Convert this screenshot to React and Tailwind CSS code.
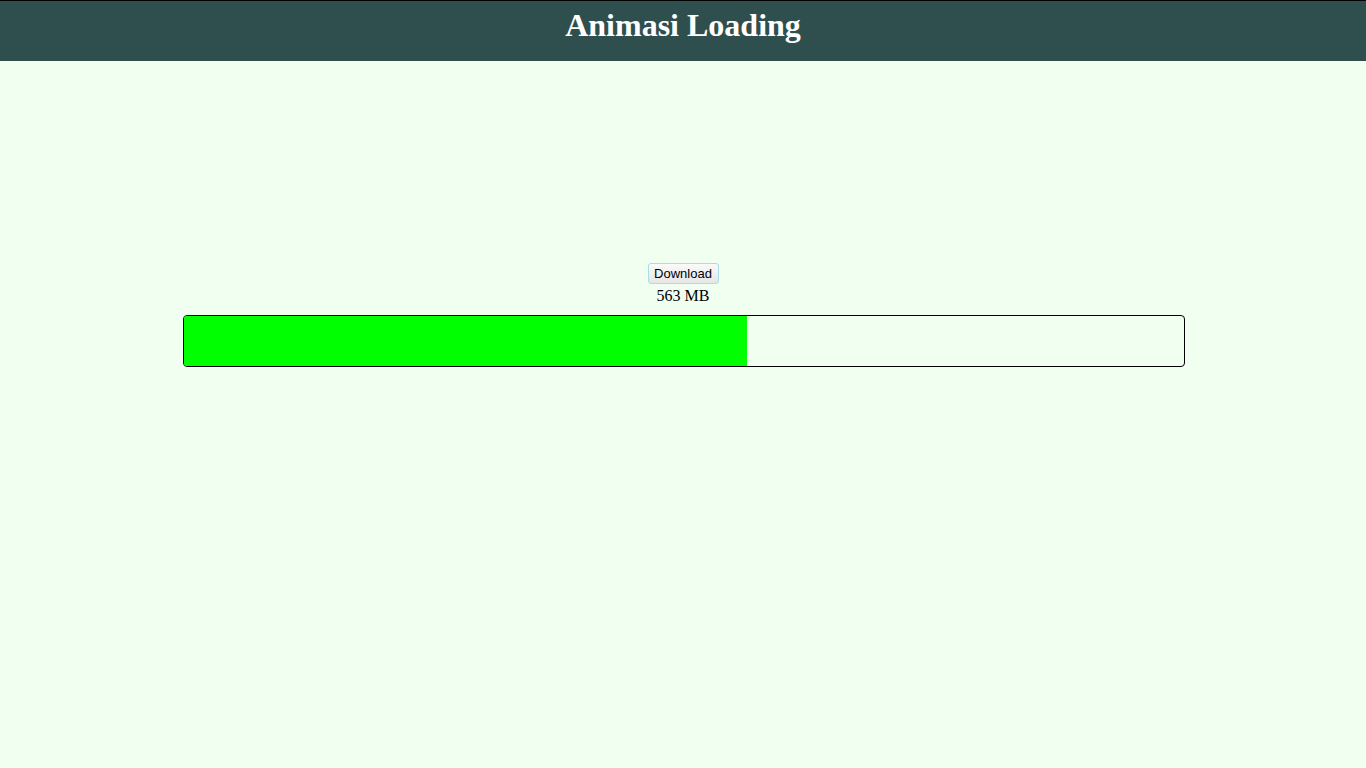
import React from 'react';

const App = () => {
    const size = 563;

    return (
        <div className="min-h-screen bg-[#f0fff0] font-['Liberation_Serif',serif] text-black">
            {/* Header */}
            <header className="h-[61px] border-t border-black bg-[#2f4f4f] pt-[6px] text-center">
                <h1 className="text-[32px] font-bold leading-[37px] text-white">Animasi Loading</h1>
            </header>

            {/* Download area */}
            <div className="flex flex-col items-center pt-[202px]">
                <button className="h-[21px] w-[71px] rounded-[3px] border border-[#a8dce6] bg-gradient-to-b from-[#fafafa] to-[#e6e6e6] font-['Liberation_Sans',sans-serif] text-[13px] leading-none text-black">
                    Download
                </button>
                <div className="mt-[3px] text-[16px] leading-[18px]">{size} MB</div>
                <div className="ml-[2px] mt-[10px] h-[52px] w-[1002px] overflow-hidden rounded-[4px] border border-black">
                    <div className="h-full bg-[#00ff00]" style={{ width: `${size}px` }} />
                </div>
            </div>
        </div>
    );
};

export default App;
